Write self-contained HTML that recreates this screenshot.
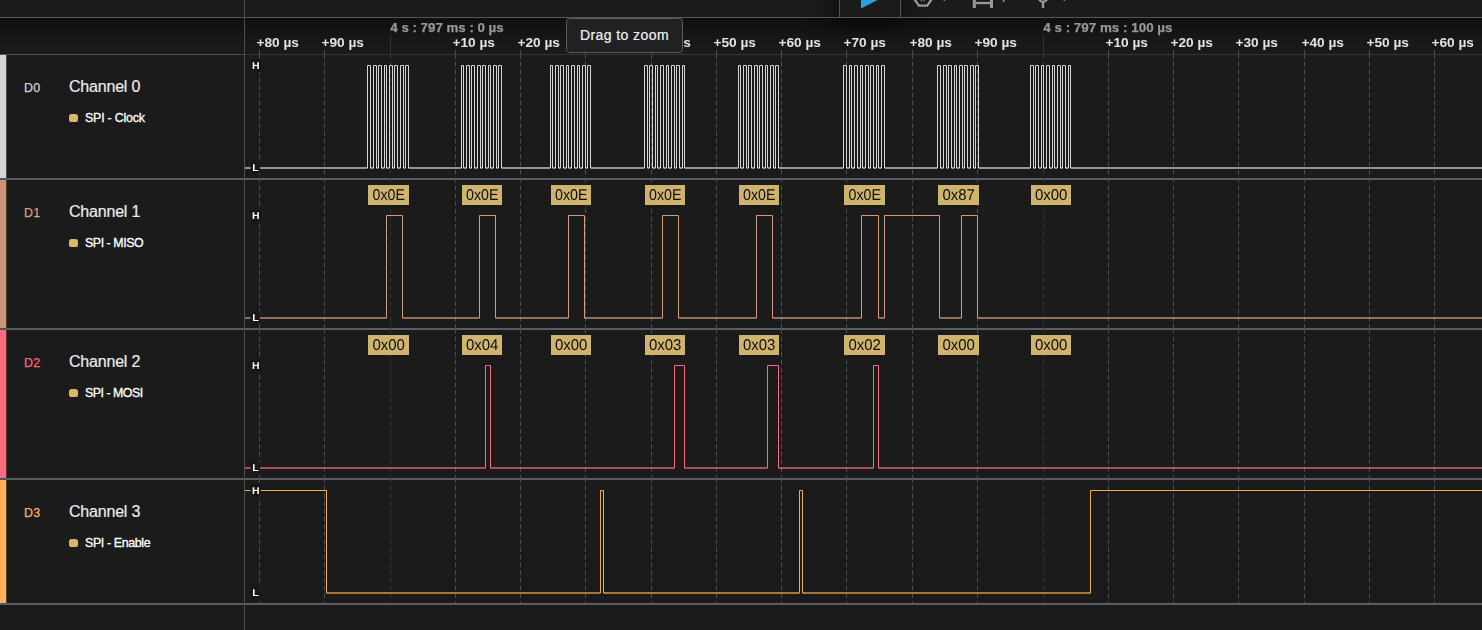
<!DOCTYPE html>
<html lang="en"><head><meta charset="utf-8"><title>Logic 2</title>
<style>
html,body{margin:0;padding:0}
body{width:1482px;height:630px;background:#1b1b1c;overflow:hidden;position:relative;font-family:"Liberation Sans",sans-serif;color:#e6e6e6}
.abs{position:absolute}
#topbar{left:0;top:0;width:1482px;height:17px;border-bottom:1px solid #55565c}
#playpanel{left:840px;top:0;width:60px;height:17px;background:#1b1b1c;box-shadow:-4px 1px 24px 5px rgba(0,0,0,.6)}
#hdr{left:0;top:18px;width:1482px;height:36px;background:linear-gradient(#0f0f0f 0,#111111 20%,#171718 55%,#1b1b1c 100%)}
#hdrline-l{left:0;top:54px;width:244px;height:1px;background:#4f5057}
#hdrline-r{left:245px;top:54px;width:1237px;height:1px;background:#34353b}
#vdiv{left:244px;top:0;width:1px;height:630px;background:#4d4e55}
.tsep{top:0;width:1px;height:17px;background:#55565c}
.rowsep{left:0;width:1482px;height:2px;background:#5b5c62}
.strip{left:0;width:7px}
.tag{left:24px;font-size:12.4px;line-height:14px;white-space:nowrap;letter-spacing:.3px;-webkit-text-stroke:.25px}
.name{left:69px;font-size:16px;line-height:18px;white-space:nowrap;color:#ececec;letter-spacing:-.2px;-webkit-text-stroke:.2px}
.sq{left:69px;width:9.3px;height:8.5px;border-radius:2.6px;background:#d6b76b}
.sub{left:85px;font-size:12.4px;line-height:14px;white-space:nowrap;color:#ffffff;-webkit-text-stroke:.3px}
#tip{left:566px;top:18px;width:115px;height:33px;border:1px solid #595a62;border-radius:3.5px;background:#212124;color:#f2f2f2;font-size:14px;line-height:33px;text-align:center;letter-spacing:.42px;white-space:nowrap;-webkit-text-stroke:.2px}
svg{position:absolute;left:0;top:0}
svg text{font-family:"Liberation Sans",sans-serif}

</style></head><body>
<div id="hdr" class="abs"></div>
<div id="hdrline-l" class="abs"></div><div id="hdrline-r" class="abs"></div>
<div id="playpanel" class="abs"></div>
<div id="topbar" class="abs"></div>
<div class="abs tsep" style="left:839px"></div><div class="abs tsep" style="left:900px"></div>
<div class="abs strip" style="top:55px;height:123px;background:linear-gradient(90deg,#d4d4d4 6px,#d4d4d440 6px)"></div>
<div class="abs tag" style="top:81px;color:#d6d6d6">D0</div>
<div class="abs name" style="top:78px">Channel 0</div>
<div class="abs sq" style="top:113.8px"></div>
<div class="abs sub" style="top:111px;letter-spacing:-0.2px">SPI - Clock</div>
<div class="abs rowsep" style="top:178px"></div>
<div class="abs" style="left:0;top:178px;width:6px;height:2px;background:#4b555f"></div>
<div class="abs strip" style="top:180px;height:148px;background:linear-gradient(90deg,#c89678 6px,#c8967840 6px)"></div>
<div class="abs tag" style="top:206px;color:#d8a180">D1</div>
<div class="abs name" style="top:203px">Channel 1</div>
<div class="abs sq" style="top:238.8px"></div>
<div class="abs sub" style="top:236px;letter-spacing:-0.45px">SPI - MISO</div>
<div class="abs rowsep" style="top:328px"></div>
<div class="abs" style="left:0;top:328px;width:6px;height:2px;background:#4b555f"></div>
<div class="abs strip" style="top:330px;height:148px;background:linear-gradient(90deg,#ff6b7d 6px,#ff6b7d40 6px)"></div>
<div class="abs tag" style="top:356px;color:#ff6475">D2</div>
<div class="abs name" style="top:353px">Channel 2</div>
<div class="abs sq" style="top:388.8px"></div>
<div class="abs sub" style="top:386px;letter-spacing:-0.5px">SPI - MOSI</div>
<div class="abs rowsep" style="top:478px"></div>
<div class="abs" style="left:0;top:478px;width:6px;height:2px;background:#4b555f"></div>
<div class="abs strip" style="top:480px;height:123px;background:linear-gradient(90deg,#ffb259 6px,#ffb25940 6px)"></div>
<div class="abs tag" style="top:506px;color:#ffb055">D3</div>
<div class="abs name" style="top:503px">Channel 3</div>
<div class="abs sq" style="top:538.8px"></div>
<div class="abs sub" style="top:536px;letter-spacing:-0.36px">SPI - Enable</div>
<div class="abs rowsep" style="top:603px"></div>
<div class="abs" style="left:0;top:603px;width:6px;height:2px;background:#565b68"></div>
<svg width="1482" height="630" viewBox="0 0 1482 630" style="will-change:transform">
<g id="toolbar-icons" fill="none" stroke="#999999">
<path d="M861 0V8.6L877.6 0Z" fill="#29a5db" stroke="none"/>
<path d="M914.4 -0.8L918.9 5.6H927.3L931.6 -0.8" stroke-width="2.3" stroke-linejoin="miter"/>
<path d="M921.4 0V1.6M924 0V1.6" stroke-width="1.2" stroke="#808080"/>
<path d="M944.3 0V1" stroke-width="1.5" stroke="#808080"/>
<path d="M974.3 0V8.1M991.5 0V8.1" stroke-width="3"/><path d="M974 3.05H992" stroke-width="2.3"/>
<path d="M1003.6 0V2" stroke-width="1.7" stroke="#909090"/>
<circle cx="1043" cy="-2.6" r="4.3" stroke-width="2.3"/><path d="M1043 2.4V8.1" stroke-width="2.4"/>
<path d="M1064.3 0V1" stroke-width="1.5" stroke="#808080"/>
</g>
<g id="grid" fill="none" stroke-width="1">
<path d="M259.5 50V54.3" stroke="#4d4e56"/>
<path d="M259.5 54.3V177.9M259.5 177.9V328.8M259.5 328.8V478M259.5 478V603" stroke="#4d4e56" stroke-dasharray="4.7 3"/>
<path d="M324.5 50V54.3" stroke="#4d4e56"/>
<path d="M324.5 54.3V177.9M324.5 177.9V328.8M324.5 328.8V478M324.5 478V603" stroke="#4d4e56" stroke-dasharray="4.7 3"/>
<path d="M390.5 36V54.3" stroke="#33353c"/>
<path d="M390.5 54.3V177.9M390.5 177.9V328.8M390.5 328.8V478M390.5 478V603" stroke="#33353c" stroke-dasharray="4.7 3"/>
<path d="M455.5 50V54.3" stroke="#4d4e56"/>
<path d="M455.5 54.3V177.9M455.5 177.9V328.8M455.5 328.8V478M455.5 478V603" stroke="#4d4e56" stroke-dasharray="4.7 3"/>
<path d="M520.5 50V54.3" stroke="#4d4e56"/>
<path d="M520.5 54.3V177.9M520.5 177.9V328.8M520.5 328.8V478M520.5 478V603" stroke="#4d4e56" stroke-dasharray="4.7 3"/>
<path d="M585.5 50V54.3" stroke="#4d4e56"/>
<path d="M585.5 54.3V177.9M585.5 177.9V328.8M585.5 328.8V478M585.5 478V603" stroke="#4d4e56" stroke-dasharray="4.7 3"/>
<path d="M651.5 50V54.3" stroke="#4d4e56"/>
<path d="M651.5 54.3V177.9M651.5 177.9V328.8M651.5 328.8V478M651.5 478V603" stroke="#4d4e56" stroke-dasharray="4.7 3"/>
<path d="M716.5 50V54.3" stroke="#4d4e56"/>
<path d="M716.5 54.3V177.9M716.5 177.9V328.8M716.5 328.8V478M716.5 478V603" stroke="#4d4e56" stroke-dasharray="4.7 3"/>
<path d="M781.5 50V54.3" stroke="#4d4e56"/>
<path d="M781.5 54.3V177.9M781.5 177.9V328.8M781.5 328.8V478M781.5 478V603" stroke="#4d4e56" stroke-dasharray="4.7 3"/>
<path d="M846.5 50V54.3" stroke="#4d4e56"/>
<path d="M846.5 54.3V177.9M846.5 177.9V328.8M846.5 328.8V478M846.5 478V603" stroke="#4d4e56" stroke-dasharray="4.7 3"/>
<path d="M912.5 50V54.3" stroke="#4d4e56"/>
<path d="M912.5 54.3V177.9M912.5 177.9V328.8M912.5 328.8V478M912.5 478V603" stroke="#4d4e56" stroke-dasharray="4.7 3"/>
<path d="M977.5 50V54.3" stroke="#4d4e56"/>
<path d="M977.5 54.3V177.9M977.5 177.9V328.8M977.5 328.8V478M977.5 478V603" stroke="#4d4e56" stroke-dasharray="4.7 3"/>
<path d="M1043.5 36V54.3" stroke="#33353c"/>
<path d="M1043.5 54.3V177.9M1043.5 177.9V328.8M1043.5 328.8V478M1043.5 478V603" stroke="#33353c" stroke-dasharray="4.7 3"/>
<path d="M1108.5 50V54.3" stroke="#4d4e56"/>
<path d="M1108.5 54.3V177.9M1108.5 177.9V328.8M1108.5 328.8V478M1108.5 478V603" stroke="#4d4e56" stroke-dasharray="4.7 3"/>
<path d="M1173.5 50V54.3" stroke="#4d4e56"/>
<path d="M1173.5 54.3V177.9M1173.5 177.9V328.8M1173.5 328.8V478M1173.5 478V603" stroke="#4d4e56" stroke-dasharray="4.7 3"/>
<path d="M1238.5 50V54.3" stroke="#4d4e56"/>
<path d="M1238.5 54.3V177.9M1238.5 177.9V328.8M1238.5 328.8V478M1238.5 478V603" stroke="#4d4e56" stroke-dasharray="4.7 3"/>
<path d="M1304.5 50V54.3" stroke="#4d4e56"/>
<path d="M1304.5 54.3V177.9M1304.5 177.9V328.8M1304.5 328.8V478M1304.5 478V603" stroke="#4d4e56" stroke-dasharray="4.7 3"/>
<path d="M1369.5 50V54.3" stroke="#4d4e56"/>
<path d="M1369.5 54.3V177.9M1369.5 177.9V328.8M1369.5 328.8V478M1369.5 478V603" stroke="#4d4e56" stroke-dasharray="4.7 3"/>
<path d="M1434.5 50V54.3" stroke="#4d4e56"/>
<path d="M1434.5 54.3V177.9M1434.5 177.9V328.8M1434.5 328.8V478M1434.5 478V603" stroke="#4d4e56" stroke-dasharray="4.7 3"/>
</g>
<g id="timeline" font-weight="bold" font-size="12.6">
<text x="256.4" y="47" fill="#e2e2e2" textLength="42.6" lengthAdjust="spacingAndGlyphs">+80 µs</text>
<text x="321.4" y="47" fill="#e2e2e2" textLength="42.6" lengthAdjust="spacingAndGlyphs">+90 µs</text>
<text x="390.3" y="32.3" font-size="13.3" fill="#979797" stroke="#979797" stroke-width=".25" textLength="113.4" lengthAdjust="spacingAndGlyphs">4 s : 797 ms : 0 µs</text>
<text x="452.4" y="47" fill="#e2e2e2" textLength="42.6" lengthAdjust="spacingAndGlyphs">+10 µs</text>
<text x="517.4" y="47" fill="#e2e2e2" textLength="42.6" lengthAdjust="spacingAndGlyphs">+20 µs</text>
<text x="582.4" y="47" fill="#e2e2e2" textLength="42.6" lengthAdjust="spacingAndGlyphs">+30 µs</text>
<text x="648.4" y="47" fill="#e2e2e2" textLength="42.6" lengthAdjust="spacingAndGlyphs">+40 µs</text>
<text x="713.4" y="47" fill="#e2e2e2" textLength="42.6" lengthAdjust="spacingAndGlyphs">+50 µs</text>
<text x="778.4" y="47" fill="#e2e2e2" textLength="42.6" lengthAdjust="spacingAndGlyphs">+60 µs</text>
<text x="843.4" y="47" fill="#e2e2e2" textLength="42.6" lengthAdjust="spacingAndGlyphs">+70 µs</text>
<text x="909.4" y="47" fill="#e2e2e2" textLength="42.6" lengthAdjust="spacingAndGlyphs">+80 µs</text>
<text x="974.4" y="47" fill="#e2e2e2" textLength="42.6" lengthAdjust="spacingAndGlyphs">+90 µs</text>
<text x="1043.3" y="32.3" font-size="13.3" fill="#979797" stroke="#979797" stroke-width=".25" textLength="129.2" lengthAdjust="spacingAndGlyphs">4 s : 797 ms : 100 µs</text>
<text x="1105.4" y="47" fill="#e2e2e2" textLength="42.6" lengthAdjust="spacingAndGlyphs">+10 µs</text>
<text x="1170.4" y="47" fill="#e2e2e2" textLength="42.6" lengthAdjust="spacingAndGlyphs">+20 µs</text>
<text x="1235.4" y="47" fill="#e2e2e2" textLength="42.6" lengthAdjust="spacingAndGlyphs">+30 µs</text>
<text x="1301.4" y="47" fill="#e2e2e2" textLength="42.6" lengthAdjust="spacingAndGlyphs">+40 µs</text>
<text x="1366.4" y="47" fill="#e2e2e2" textLength="42.6" lengthAdjust="spacingAndGlyphs">+50 µs</text>
<text x="1431.4" y="47" fill="#e2e2e2" textLength="42.6" lengthAdjust="spacingAndGlyphs">+60 µs</text>
</g>
<g id="waves">
<path d="M245 168H367.5V65.5H370.5V168H373.5V65.5H376.5V168H378.5V65.5H381.5V168H384.5V65.5H386.5V168H389.5V65.5H392.5V168H394.5V65.5H397.5V168H400.5V65.5H403.5V168H405.5V65.5H408.5V168H461.5V65.5H463.5V168H466.5V65.5H469.5V168H471.5V65.5H474.5V168H477.5V65.5H480.5V168H482.5V65.5H485.5V168H488.5V65.5H490.5V168H493.5V65.5H496.5V168H498.5V65.5H501.5V168H550.5V65.5H552.5V168H555.5V65.5H558.5V168H560.5V65.5H563.5V168H566.5V65.5H568.5V168H571.5V65.5H574.5V168H577.5V65.5H579.5V168H582.5V65.5H585.5V168H587.5V65.5H590.5V168H644.5V65.5H647.5V168H649.5V65.5H652.5V168H655.5V65.5H657.5V168H660.5V65.5H663.5V168H666.5V65.5H668.5V168H671.5V65.5H674.5V168H676.5V65.5H679.5V168H682.5V65.5H684.5V168H738.5V65.5H740.5V168H743.5V65.5H746.5V168H748.5V65.5H751.5V168H754.5V65.5H757.5V168H759.5V65.5H762.5V168H765.5V65.5H767.5V168H770.5V65.5H773.5V168H775.5V65.5H778.5V168H843.5V65.5H846.5V168H849.5V65.5H851.5V168H854.5V65.5H857.5V168H860.5V65.5H862.5V168H865.5V65.5H868.5V168H870.5V65.5H873.5V168H876.5V65.5H878.5V168H881.5V65.5H884.5V168H937.5V65.5H940.5V168H943.5V65.5H946.5V168H948.5V65.5H951.5V168H954.5V65.5H956.5V168H959.5V65.5H962.5V168H964.5V65.5H967.5V168H970.5V65.5H973.5V168H975.5V65.5H978.5V168H1030.5V65.5H1033.5V168H1035.5V65.5H1038.5V168H1041.5V65.5H1043.5V168H1046.5V65.5H1049.5V168H1052.5V65.5H1054.5V168H1057.5V65.5H1060.5V168H1062.5V65.5H1065.5V168H1068.5V65.5H1070.5V168H1482" fill="none" stroke="#d6d6d6" stroke-width="1" stroke-linejoin="miter"/>
<path d="M245 168H367.5M370.5 168H373.5M376.5 168H378.5M381.5 168H384.5M386.5 168H389.5M392.5 168H394.5M397.5 168H400.5M403.5 168H405.5M408.5 168H461.5M463.5 168H466.5M469.5 168H471.5M474.5 168H477.5M480.5 168H482.5M485.5 168H488.5M490.5 168H493.5M496.5 168H498.5M501.5 168H550.5M552.5 168H555.5M558.5 168H560.5M563.5 168H566.5M568.5 168H571.5M574.5 168H577.5M579.5 168H582.5M585.5 168H587.5M590.5 168H644.5M647.5 168H649.5M652.5 168H655.5M657.5 168H660.5M663.5 168H666.5M668.5 168H671.5M674.5 168H676.5M679.5 168H682.5M684.5 168H738.5M740.5 168H743.5M746.5 168H748.5M751.5 168H754.5M757.5 168H759.5M762.5 168H765.5M767.5 168H770.5M773.5 168H775.5M778.5 168H843.5M846.5 168H849.5M851.5 168H854.5M857.5 168H860.5M862.5 168H865.5M868.5 168H870.5M873.5 168H876.5M878.5 168H881.5M884.5 168H937.5M940.5 168H943.5M946.5 168H948.5M951.5 168H954.5M956.5 168H959.5M962.5 168H964.5M967.5 168H970.5M973.5 168H975.5M978.5 168H1030.5M1033.5 168H1035.5M1038.5 168H1041.5M1043.5 168H1046.5M1049.5 168H1052.5M1054.5 168H1057.5M1060.5 168H1062.5M1065.5 168H1068.5M1070.5 168H1482" fill="none" stroke="#d6d6d6" stroke-opacity=".4" stroke-width="1.6"/>
<path d="M245 318H386.5V215.5H402.5V318H479.5V215.5H495.5V318H568.5V215.5H584.5V318H662.5V215.5H678.5V318H756.5V215.5H772.5V318H861.5V215.5H878.5V318H884.5V215.5H939.5V318H961.5V215.5H977.5V318H1482" fill="none" stroke="#d29d7e" stroke-width="1" stroke-linejoin="miter"/>
<path d="M245 318H386.5M402.5 318H479.5M495.5 318H568.5M584.5 318H662.5M678.5 318H756.5M772.5 318H861.5M878.5 318H884.5M939.5 318H961.5M977.5 318H1482" fill="none" stroke="#d29d7e" stroke-opacity=".4" stroke-width="1.6"/>
<path d="M245 468H485.5V365.5H490.5V468H674.5V365.5H684.5V468H767.5V365.5H778.5V468H873.5V365.5H878.5V468H1482" fill="none" stroke="#fa6b7d" stroke-width="1" stroke-linejoin="miter"/>
<path d="M245 468H485.5M490.5 468H674.5M684.5 468H767.5M778.5 468H873.5M878.5 468H1482" fill="none" stroke="#fa6b7d" stroke-opacity=".4" stroke-width="1.6"/>
<path d="M245 490.5H326.5V593H600.5V490.5H603.5V593H799.5V490.5H802.5V593H1090.5V490.5H1482" fill="none" stroke="#f7a94e" stroke-width="1" stroke-linejoin="miter"/>
<path d="M326.5 593H600.5M603.5 593H799.5M802.5 593H1090.5" fill="none" stroke="#f7a94e" stroke-opacity=".4" stroke-width="1.6"/>
</g>
<g id="bubbles" font-size="15.7">
<rect x="368" y="185" width="41" height="20" fill="#d0b46e"/>
<text transform="translate(372.5,200) rotate(.1)" fill="#0d0d0c" textLength="32.4" lengthAdjust="spacingAndGlyphs">0x0E</text>
<rect x="462" y="185" width="40" height="20" fill="#d0b46e"/>
<text transform="translate(466,200) rotate(.1)" fill="#0d0d0c" textLength="32.4" lengthAdjust="spacingAndGlyphs">0x0E</text>
<rect x="551" y="185" width="40" height="20" fill="#d0b46e"/>
<text transform="translate(555,200) rotate(.1)" fill="#0d0d0c" textLength="32.4" lengthAdjust="spacingAndGlyphs">0x0E</text>
<rect x="645" y="185" width="40" height="20" fill="#d0b46e"/>
<text transform="translate(649,200) rotate(.1)" fill="#0d0d0c" textLength="32.4" lengthAdjust="spacingAndGlyphs">0x0E</text>
<rect x="739" y="185" width="40" height="20" fill="#d0b46e"/>
<text transform="translate(743,200) rotate(.1)" fill="#0d0d0c" textLength="32.4" lengthAdjust="spacingAndGlyphs">0x0E</text>
<rect x="844" y="185" width="41" height="20" fill="#d0b46e"/>
<text transform="translate(848.5,200) rotate(.1)" fill="#0d0d0c" textLength="32.4" lengthAdjust="spacingAndGlyphs">0x0E</text>
<rect x="938" y="185" width="41" height="20" fill="#d0b46e"/>
<text transform="translate(942.5,200) rotate(.1)" fill="#0d0d0c" textLength="32.4" lengthAdjust="spacingAndGlyphs">0x87</text>
<rect x="1031" y="185" width="40" height="20" fill="#d0b46e"/>
<text transform="translate(1035,200) rotate(.1)" fill="#0d0d0c" textLength="32.4" lengthAdjust="spacingAndGlyphs">0x00</text>
<rect x="368" y="335" width="41" height="20" fill="#d0b46e"/>
<text transform="translate(372.5,350) rotate(.1)" fill="#0d0d0c" textLength="32.4" lengthAdjust="spacingAndGlyphs">0x00</text>
<rect x="462" y="335" width="40" height="20" fill="#d0b46e"/>
<text transform="translate(466,350) rotate(.1)" fill="#0d0d0c" textLength="32.4" lengthAdjust="spacingAndGlyphs">0x04</text>
<rect x="551" y="335" width="40" height="20" fill="#d0b46e"/>
<text transform="translate(555,350) rotate(.1)" fill="#0d0d0c" textLength="32.4" lengthAdjust="spacingAndGlyphs">0x00</text>
<rect x="645" y="335" width="40" height="20" fill="#d0b46e"/>
<text transform="translate(649,350) rotate(.1)" fill="#0d0d0c" textLength="32.4" lengthAdjust="spacingAndGlyphs">0x03</text>
<rect x="739" y="335" width="40" height="20" fill="#d0b46e"/>
<text transform="translate(743,350) rotate(.1)" fill="#0d0d0c" textLength="32.4" lengthAdjust="spacingAndGlyphs">0x03</text>
<rect x="844" y="335" width="41" height="20" fill="#d0b46e"/>
<text transform="translate(848.5,350) rotate(.1)" fill="#0d0d0c" textLength="32.4" lengthAdjust="spacingAndGlyphs">0x02</text>
<rect x="938" y="335" width="41" height="20" fill="#d0b46e"/>
<text transform="translate(942.5,350) rotate(.1)" fill="#0d0d0c" textLength="32.4" lengthAdjust="spacingAndGlyphs">0x00</text>
<rect x="1031" y="335" width="40" height="20" fill="#d0b46e"/>
<text transform="translate(1035,350) rotate(.1)" fill="#0d0d0c" textLength="32.4" lengthAdjust="spacingAndGlyphs">0x00</text>
</g>
<g id="hl" font-weight="bold" font-size="10" fill="#ffffff" stroke="#151516" stroke-width="3" stroke-linejoin="round" paint-order="stroke">
<rect x="250.6" y="58.1" width="10.2" height="14.6" rx="3.5" fill="#18181a" stroke="none"/>
<rect x="250.6" y="160.1" width="9.4" height="14.6" rx="3.5" fill="#18181a" stroke="none"/>
<rect x="250.6" y="208.1" width="10.2" height="14.6" rx="3.5" fill="#18181a" stroke="none"/>
<rect x="250.6" y="310.1" width="9.4" height="14.6" rx="3.5" fill="#18181a" stroke="none"/>
<rect x="250.6" y="358.1" width="10.2" height="14.6" rx="3.5" fill="#18181a" stroke="none"/>
<rect x="250.6" y="460.1" width="9.4" height="14.6" rx="3.5" fill="#18181a" stroke="none"/>
<rect x="250.6" y="483.1" width="10.2" height="14.6" rx="3.5" fill="#18181a" stroke="none"/>
<rect x="250.6" y="585.1" width="9.4" height="14.6" rx="3.5" fill="#18181a" stroke="none"/>
<text transform="translate(252.1,69) rotate(.2) scale(1.05,1)">H</text>
<text transform="translate(252.2,171) rotate(.2) scale(1.08,1)">L</text>
<text transform="translate(252.1,219) rotate(.2) scale(1.05,1)">H</text>
<text transform="translate(252.2,321) rotate(.2) scale(1.08,1)">L</text>
<text transform="translate(252.1,369) rotate(.2) scale(1.05,1)">H</text>
<text transform="translate(252.2,471) rotate(.2) scale(1.08,1)">L</text>
<text transform="translate(252.1,494) rotate(.2) scale(1.05,1)">H</text>
<text transform="translate(252.2,596) rotate(.2) scale(1.08,1)">L</text>
</g>
</svg>
<div id="vdiv" class="abs"></div>
<div id="tip" class="abs">Drag to zoom</div>
</body></html>
